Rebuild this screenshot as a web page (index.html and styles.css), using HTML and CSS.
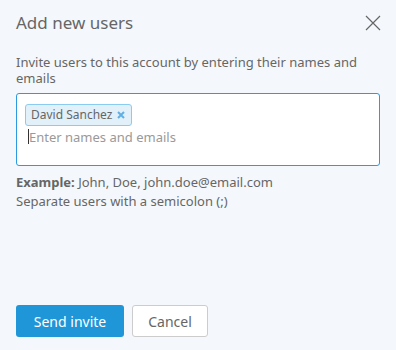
FILE: index.html
```html
<!DOCTYPE html>
<html lang="en">
<head>
  <meta charset="UTF-8">
  <meta name="viewport" content="width=device-width, initial-scale=1.0">
  <title>Add new users</title>
  <link rel="stylesheet" href="styles.css">
</head>
<body>

<div class="dialog">
  <div class="dialog-header">
    <h2>Add new users</h2>
    <button class="close-btn" aria-label="Close">
      <svg width="16" height="16" viewBox="0 0 16 16">
        <path d="M1 1 L15 15 M15 1 L1 15" stroke="#666" stroke-width="1.2" fill="none"/>
      </svg>
    </button>
  </div>

  <p class="intro">Invite users to this account by entering their names and emails</p>

  <div class="tag-input">
    <div class="tags">
      <span class="tag">David Sanchez
        <svg class="tag-remove" width="8" height="8" viewBox="0 0 8 8">
          <path d="M1 1 L7 7 M7 1 L1 7" stroke="#5fb0e4" stroke-width="2" fill="none"/>
        </svg>
      </span>
    </div>
    <div class="entry"><span class="caret"></span><span class="placeholder">Enter names and emails</span></div>
  </div>

  <div class="hint hint-first"><b>Example:</b> John, Doe, john.doe@email.com</div>
  <div class="hint">Separate users with a semicolon (;)</div>

  <div class="actions">
    <button class="btn btn-primary">Send invite</button>
    <button class="btn btn-secondary">Cancel</button>
  </div>
</div>

</body>
</html>
```

FILE: styles.css
```css
body {
  margin: 0;
  font-family: "Noto Sans", Arial, sans-serif;
  background-color: #f4f8fc;
  color: #666;
}
.dialog {
  height: 350px;
  box-sizing: border-box;
  padding: 10px 16px 13px;
  display: flex;
  flex-direction: column;
}
.dialog-header {
  display: flex;
  justify-content: space-between;
  align-items: center;
  height: 24px;
}
h2 {
  margin: 0;
  font-size: 17px;
  font-weight: normal;
  color: #666;
}
.close-btn {
  background: none;
  border: none;
  padding: 0;
  width: 16px;
  height: 16px;
  margin-right: -1px;
  margin-top: 2px;
  cursor: pointer;
}
.intro {
  margin: 20px 0 7px;
  font-size: 13px;
  line-height: 16px;
}
.tag-input {
  height: 73px;
  box-sizing: border-box;
  border: 1px solid #2b9ae0;
  border-radius: 3px;
  background-color: #fff;
  padding: 8px 8px;
}
.tag {
  display: inline-flex;
  align-items: center;
  gap: 5px;
  height: 22px;
  box-sizing: border-box;
  padding: 0 6px 0 5px;
  background-color: #e2f0fa;
  border: 1px solid #8ccbf0;
  border-radius: 3px;
  font-size: 12px;
  color: #666;
}
.tag-remove {
  margin-top: 1px;
}
.entry {
  display: flex;
  align-items: center;
  margin-top: 1px;
  padding-left: 3px;
  height: 20px;
}
.caret {
  width: 1px;
  height: 15px;
  background-color: #333;
}
.placeholder {
  font-size: 13px;
  color: #999;
}
.hint {
  font-size: 13px;
  line-height: 19px;
}
.hint-first {
  margin-top: 7px;
}
.actions {
  margin-top: auto;
  display: flex;
  gap: 8px;
}
.btn {
  height: 32px;
  border-radius: 3px;
  font-family: inherit;
  font-size: 14px;
  cursor: pointer;
}
.btn-primary {
  width: 108px;
  background-color: #1f96d8;
  border: none;
  color: #fff;
}
.btn-secondary {
  width: 76px;
  background-color: #fff;
  border: 1px solid #ccc;
  color: #666;
}
```
